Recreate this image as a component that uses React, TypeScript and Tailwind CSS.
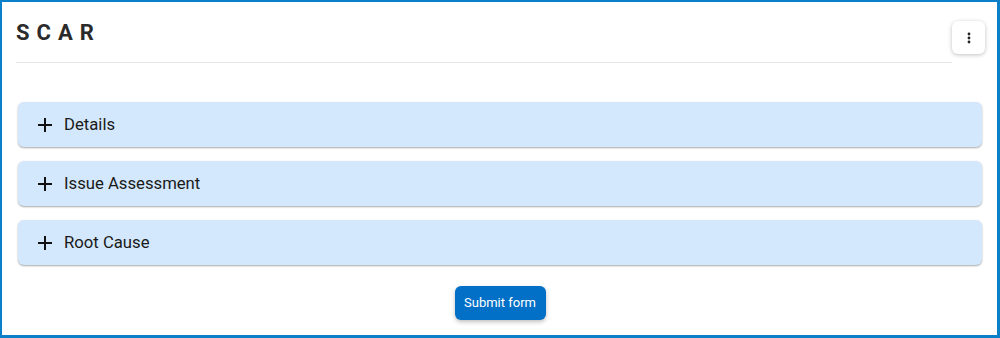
const sections = ['Details', 'Issue Assessment', 'Root Cause']

export default function App() {
  return (
    <div
      className="flex h-[338px] w-[1000px] flex-col border-2 border-r-[3px] border-b-[3px] border-[#0a80c8] bg-white"
      style={{ fontFamily: 'Roboto, "Liberation Sans", sans-serif' }}
    >
      {/* Header */}
      <div className="flex items-start pl-[14px] pr-[12px] pt-[19px]">
        <div className="flex-1 border-b border-[#e6e6e6] pb-[17px]">
          <h1 className="text-[22px] leading-[24px] font-bold tracking-[0.32em] text-[#2b2b2b]">
            SCAR
          </h1>
        </div>
        <button className="flex h-[33px] w-[33px] items-center justify-center rounded-md bg-white shadow-[0_1px_4px_rgba(0,0,0,0.25)]">
          <svg width="4" height="12" viewBox="0 0 4 12" className="fill-[#222]">
            <circle cx="2" cy="2" r="1.4" />
            <circle cx="2" cy="6" r="1.4" />
            <circle cx="2" cy="10" r="1.4" />
          </svg>
        </button>
      </div>

      {/* Accordions */}
      <div className="mt-[39px] flex flex-col gap-[14px] pl-[16px] pr-[15px]">
        {sections.map((s) => (
          <div
            key={s}
            className="flex h-[45px] items-center gap-[12px] rounded-md bg-[#d3e8fc] pl-[20px] shadow-[0_1px_2px_rgba(0,0,0,0.35)]"
          >
            <svg width="14" height="14" viewBox="0 0 14 14" className="stroke-[#111]" strokeWidth="2">
              <path d="M7 0v14M0 7h14" />
            </svg>
            <span className="text-[16.7px] text-[#1a1a1a]">{s}</span>
          </div>
        ))}
      </div>

      {/* Submit */}
      <div className="mt-[21px] flex justify-center pl-px">
        <button className="h-[34px] w-[91px] rounded-md bg-[#0270c6] text-[13px] text-white shadow-[0_2px_4px_rgba(0,0,0,0.25)]">
          Submit form
        </button>
      </div>
    </div>
  )
}
